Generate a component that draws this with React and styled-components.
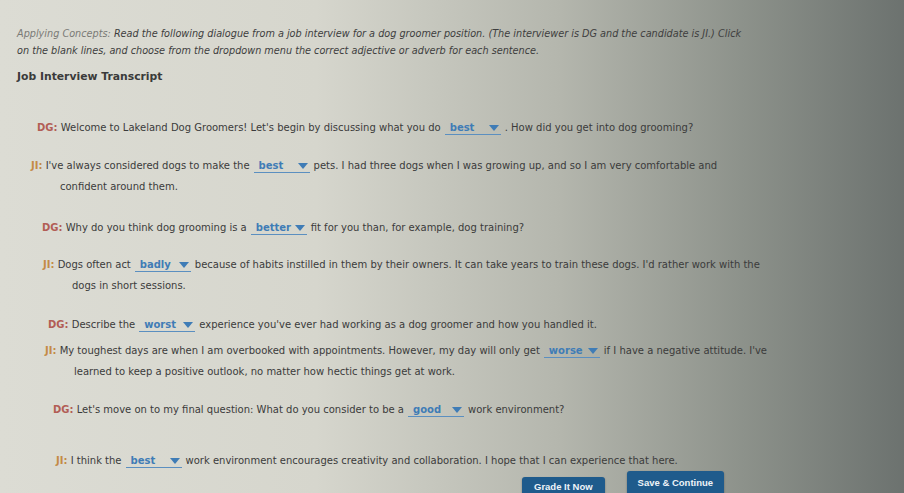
import React from "react"
import styled, {createGlobalStyle} from "styled-components"

const GlobalStyle = createGlobalStyle`
  html, body {
    margin: 0;
    padding: 0;
    height: 493px;
    overflow: hidden;
  }
  body {
    font-family: "DejaVu Sans", Verdana, sans-serif;
    background: linear-gradient(90deg, #dcdcd4 0%, #d6d6cd 35%, #b4b6ad 62%, #8d928b 82%, #6c726f 100%);
  }
`

const Page = styled.div`
  height: 493px;
  padding: 25px 0 0 17px;
  box-sizing: border-box;
  color: #3b3b3b;
  overflow: hidden;
`

const Intro = styled.p`
  margin: 0;
  font-size: 9.7px;
  font-style: italic;
  line-height: 17px;
  color: #3e3e3e;

  & > em {
    color: #7a7a76;
  }
`

const Heading = styled.h3`
  margin: 11px 0 0;
  font-size: 10.8px;
  font-weight: bold;
  color: #3a3a3a;
`

const Transcript = styled.div`
  display: flex;
  flex-direction: column;
  margin-top: 34px;
`

const Speech = styled.p`
  margin: 0 0 ${(p) => p.$gap}px;
  padding-left: ${(p) => p.$indent + 29}px;
  text-indent: -29px;
  font-size: 10px;
  line-height: 21px;
  color: #3b3b3b;
`

const Speaker = styled.span`
  font-weight: bold;
  color: ${(p) => (p.$who === "DG" ? "#b25d55" : "#c48a46")};
`

const Drop = styled.span`
  display: inline-flex;
  align-items: center;
  justify-content: space-between;
  text-indent: 0;
  width: 56px;
  box-sizing: border-box;
  padding: 0 2px 0 5px;
  margin: 0 4px;
  border-bottom: 1.5px solid #5b8fc0;
  line-height: 13px;
  font-weight: bold;
  color: #3f7cb6;
  vertical-align: baseline;
`

const Arrow = styled.svg`
  width: 10px;
  height: 6px;
  flex: none;
`

const Buttons = styled.div`
  display: flex;
  gap: 22px;
  margin: 0 0 0 505px;
  align-items: flex-start;
`

const Button = styled.button`
  font-family: "Liberation Sans", Arial, sans-serif;
  font-size: 9.5px;
  font-weight: bold;
  color: #eef3f8;
  background: #1f5b8c;
  border: none;
  border-radius: 3px;
  padding: ${(p) => (p.$raised ? "6px 11px 10px" : "4px 12px 8px")};
  margin-top: ${(p) => (p.$raised ? 0 : 6)}px;
  box-shadow: 0 1px 2px rgba(0, 0, 0, 0.35);
`

const Select = ({value}) => (
  <Drop>
    {value}
    <Arrow viewBox="0 0 10 6">
      <polygon points="0,0 10,0 5,6" fill="#3f7cb6" />
    </Arrow>
  </Drop>
)

const lines = [
  {who: "DG", indent: 20, gap: 17, parts: ["Welcome to Lakeland Dog Groomers! Let's begin by discussing what you do", "best", ". How did you get into dog grooming?"]},
  {who: "JI", indent: 14, gap: 20, parts: ["I've always considered dogs to make the", "best", "pets. I had three dogs when I was growing up, and so I am very comfortable and", null, "confident around them."]},
  {who: "DG", indent: 25, gap: 16, parts: ["Why do you think dog grooming is a", "better", "fit for you than, for example, dog training?"]},
  {who: "JI", indent: 26, gap: 18, parts: ["Dogs often act", "badly", "because of habits instilled in them by their owners. It can take years to train these dogs. I'd rather work with the", null, "dogs in short sessions."]},
  {who: "DG", indent: 31, gap: 5, parts: ["Describe the", "worst", "experience you've ever had working as a dog groomer and how you handled it."]},
  {who: "JI", indent: 28, gap: 17, parts: ["My toughest days are when I am overbooked with appointments. However, my day will only get", "worse", "if I have a negative attitude. I've", null, "learned to keep a positive outlook, no matter how hectic things get at work."]},
  {who: "DG", indent: 36, gap: 30, parts: ["Let's move on to my final question: What do you consider to be a", "good", "work environment?"]},
  {who: "JI", indent: 39, gap: 0, parts: ["I think the", "best", "work environment encourages creativity and collaboration. I hope that I can experience that here."]},
]

const App = () => {
  return (
    <>
      <GlobalStyle />
      <Page>
        <Intro>
          <em>Applying Concepts:</em> Read the following dialogue from a job interview for a dog groomer position. (The
          interviewer is DG and the candidate is JI.) Click
          <br />
          on the blank lines, and choose from the dropdown menu the correct adjective or adverb for each sentence.
        </Intro>
        <Heading>Job Interview Transcript</Heading>
        <Transcript>
          {lines.map((line, i) => (
            <Speech key={i} $indent={line.indent} $gap={line.gap}>
              <Speaker $who={line.who}>{line.who}:</Speaker> {line.parts[0]}
              <Select value={line.parts[1]} />
              {line.parts[2]}
              {line.parts[3] === null && (
                <>
                  <br />
                  {line.parts[4]}
                </>
              )}
            </Speech>
          ))}
        </Transcript>
        <Buttons>
          <Button $raised={false}>Grade It Now</Button>
          <Button $raised>Save &amp; Continue</Button>
        </Buttons>
      </Page>
    </>
  )
}

export default App
